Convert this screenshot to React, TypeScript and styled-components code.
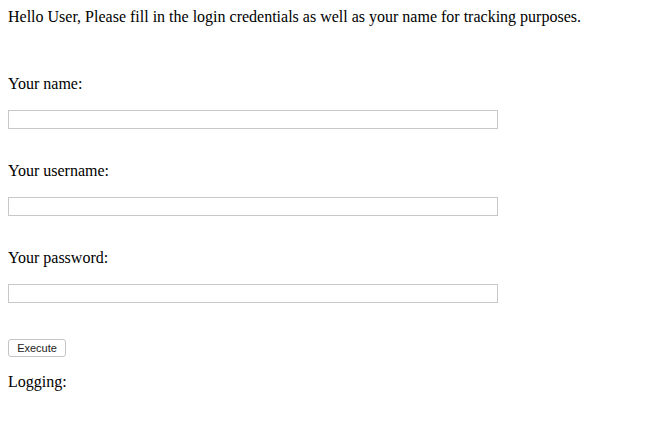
import styled, { createGlobalStyle } from "styled-components";

const GlobalStyle = createGlobalStyle`
  body {
    margin: 8px;
    background: #ffffff;
    font-family: "Liberation Serif", "Times New Roman", serif;
    font-size: 16px;
    color: #000000;
  }
`;

const Page = styled.div`
  display: flex;
  flex-direction: column;
  align-items: flex-start;
`;

const Intro = styled.p`
  margin: 0;
  height: 18px;
  line-height: 18px;
`;

const Field = styled.div`
  display: flex;
  flex-direction: column;
  align-items: flex-start;
  margin-top: ${(p: { $first?: boolean }) => (p.$first ? "49px" : "33px")};
`;

const Label = styled.label`
  height: 18px;
  line-height: 18px;
`;

const TextInput = styled.input`
  box-sizing: border-box;
  width: 490px;
  height: 19px;
  margin: 17px 0 0;
  padding: 0 2px;
  border: 1px solid #c8c8c8;
  border-radius: 0;
  background: #ffffff;
  outline: none;
`;

const Button = styled.button`
  box-sizing: border-box;
  width: 58px;
  height: 18px;
  margin-top: 36px;
  padding: 0;
  border: 1px solid #c4c4c4;
  border-radius: 3px;
  background: #ffffff;
  font-family: "Liberation Sans", Arial, sans-serif;
  font-size: 11px;
  color: #222222;
  line-height: 16px;
`;

const Logging = styled.p`
  margin: 16px 0 0;
  height: 18px;
  line-height: 18px;
`;

export default function App() {
  return (
    <Page>
      <GlobalStyle />
      <Intro>
        Hello User, Please fill in the login credentials as well as your name for tracking purposes.
      </Intro>
      <Field $first>
        <Label htmlFor="name">Your name:</Label>
        <TextInput id="name" type="text" />
      </Field>
      <Field>
        <Label htmlFor="username">Your username:</Label>
        <TextInput id="username" type="text" />
      </Field>
      <Field>
        <Label htmlFor="password">Your password:</Label>
        <TextInput id="password" type="password" />
      </Field>
      <Button type="button">Execute</Button>
      <Logging>Logging:</Logging>
    </Page>
  );
}
